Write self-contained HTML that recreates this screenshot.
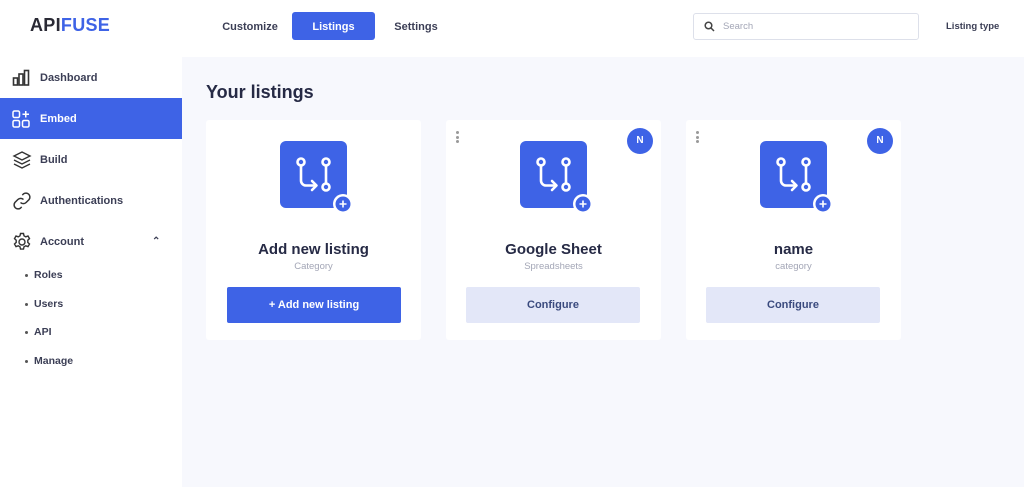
<!DOCTYPE html>
<html><head><style>
*{margin:0;padding:0;box-sizing:border-box}
body{width:1024px;height:487px;overflow:hidden;background:#f7f8fd;font-family:"Liberation Sans",sans-serif;position:relative;color:#2c2f4a}
.side{position:absolute;left:0;top:0;width:182px;height:487px;background:#fff}
.logo{position:absolute;left:30px;top:15px;font-size:18px;font-weight:bold;letter-spacing:0.3px;color:#2a2a35}
.logo span{color:#3e63e6}
.nav{position:absolute;left:0;width:182px;height:41px;display:flex;align-items:center;font-size:11px;font-weight:bold;color:#3b3e55}
.nav svg{position:absolute;left:12px}
.nav .t{position:absolute;left:40px}
.nav.act{background:#3e63e6;color:#fff}
.sub{position:absolute;left:25px;font-size:10.5px;font-weight:bold;color:#3b3e55}
.sub:before{content:"";display:inline-block;width:3px;height:3px;border-radius:50%;background:#555;margin-right:6px;vertical-align:middle}
.top{position:absolute;left:182px;top:0;width:842px;height:57px;background:#fff}
.tab{position:absolute;top:12px;height:28px;line-height:28px;font-size:11px;font-weight:bold;color:#3b3e55;text-align:center;border-radius:3px}
.search{position:absolute;left:693px;top:13px;width:226px;height:27px;border:1px solid #dde0ea;border-radius:3px;background:#fff}
h1{position:absolute;left:206px;top:82px;font-size:18px;font-weight:bold;color:#262a45}
.card{position:absolute;top:120px;width:215px;height:220px;background:#fff;border-radius:3px}
.tile{position:absolute;left:74px;top:21px;width:67px;height:67px;overflow:visible}
.title{position:absolute;top:121px;width:100%;text-align:center;font-size:15px;font-weight:bold;color:#262a45}
.cat{position:absolute;top:141px;width:100%;text-align:center;font-size:9.5px;color:#a3a6b6}
.btn{position:absolute;left:21px;top:167px;width:174px;height:36px;border-radius:2px;text-align:center;line-height:36px;font-size:11px;font-weight:bold}
.av{position:absolute;left:181px;top:8px;width:26px;height:26px;border-radius:50%;background:#3e63e6;color:#fff;font-size:10px;font-weight:bold;text-align:center;line-height:26px}
.dots{position:absolute;left:10px;top:11px;width:3px}
.dots i{display:block;width:3px;height:3px;border-radius:50%;background:#999;margin-bottom:1.5px}
</style></head><body>
<div class="side">
<div class="logo">API<span>FUSE</span></div>
<div class="nav" style="top:57px"><svg width="18" height="18" viewBox="0 0 18 18" fill="none" stroke="#333" stroke-width="1.6"><rect x="1.5" y="9" width="4" height="7"/><rect x="7" y="5" width="4" height="11"/><rect x="12.5" y="1.5" width="4" height="14.5"/></svg><span class="t">Dashboard</span></div>
<div class="nav act" style="top:98px"><svg width="18" height="18" viewBox="0 0 18 18" fill="none" stroke="#fff" stroke-width="1.5"><rect x="1" y="1" width="6.5" height="6.5" rx="1.5"/><rect x="1" y="10.5" width="6.5" height="6.5" rx="1.5"/><rect x="10.5" y="10.5" width="6.5" height="6.5" rx="1.5"/><path d="M13.75 1v6.5M10.5 4.25h6.5"/></svg><span class="t">Embed</span></div>
<div class="nav" style="top:139px"><svg width="20" height="20" viewBox="0 0 20 20" fill="none" stroke="#333" stroke-width="1.4"><path d="M10 2L18 6 10 10 2 6z"/><path d="M2 10l8 4 8-4"/><path d="M2 14l8 4 8-4"/></svg><span class="t">Build</span></div>
<div class="nav" style="top:180px"><svg width="20" height="20" viewBox="0 0 20 20" fill="none" stroke="#333" stroke-width="1.5"><path d="M8.5 11.5a4 4 0 0 0 5.6 0l3-3a4 4 0 0 0-5.6-5.6l-1.2 1.2"/><path d="M11.5 8.5a4 4 0 0 0-5.6 0l-3 3a4 4 0 0 0 5.6 5.6l1.2-1.2"/></svg><span class="t">Authentications</span></div>
<div class="nav" style="top:221px"><svg width="20" height="20" viewBox="0 0 20 20" fill="none" stroke="#333" stroke-width="1.4"><circle cx="10" cy="10" r="3"/><path d="M8.5 1.5h3l.5 2.3 1.8 1 2.2-.8 1.5 2.6-1.7 1.6v2.2l1.7 1.6-1.5 2.6-2.2-.8-1.8 1-.5 2.3h-3l-.5-2.3-1.8-1-2.2.8-1.5-2.6 1.7-1.6V8.2L2.5 6.6 4 4l2.2.8 1.8-1z"/></svg><span class="t">Account</span><span style="position:absolute;left:152px;font-size:10px">&#8963;</span></div>
<div class="sub" style="top:269px">Roles</div>
<div class="sub" style="top:298px">Users</div>
<div class="sub" style="top:326px">API</div>
<div class="sub" style="top:355px">Manage</div>
</div>
<div class="top"></div>
<div class="tab" style="left:210px;width:80px;top:13px">Customize</div>
<div class="tab" style="left:292px;width:83px;background:#3e63e6;color:#fff;top:12px;line-height:30px">Listings</div>
<div class="tab" style="left:378px;width:76px;top:13px">Settings</div>
<div class="search"><svg style="position:absolute;left:10px;top:7px" width="11" height="11" viewBox="0 0 11 11" fill="none" stroke="#444" stroke-width="1.5"><circle cx="4.5" cy="4.5" r="3.3"/><path d="M7 7l3 3"/></svg><span style="position:absolute;left:29px;top:7px;font-size:9.5px;color:#a3a6b6">Search</span></div>
<div style="position:absolute;left:946px;top:21px;font-size:9.5px;font-weight:bold;color:#3b3e55">Listing type</div>
<h1>Your listings</h1>

<div class="card" style="left:206px">
<svg class="tile" viewBox="0 0 67 67"><rect width="67" height="67" rx="6" fill="#3e63e6"/><g fill="none" stroke="#fff" stroke-width="2.6" stroke-linecap="round" stroke-linejoin="round"><circle cx="21" cy="21" r="3.5"/><circle cx="46" cy="21" r="3.5"/><circle cx="46" cy="46" r="3.5"/><path d="M46 24.5v18"/><path d="M21 24.5v15a5 5 0 0 0 5 5h9"/><path d="M32 40l4.5 4.5L32 49"/></g><circle cx="63" cy="63" r="10" fill="#fff"/><circle cx="63" cy="63" r="7.5" fill="#3e63e6"/><path d="M63 59.5v7M59.5 63h7" stroke="#fff" stroke-width="1.6"/></svg>
<div class="title">Add new listing</div><div class="cat">Category</div>
<div class="btn" style="background:#3e63e6;color:#fff">+ Add new listing</div>
</div>

<div class="card" style="left:446px">
<div class="dots"><i></i><i></i><i></i></div><div class="av">N</div>
<svg class="tile" viewBox="0 0 67 67"><rect width="67" height="67" rx="6" fill="#3e63e6"/><g fill="none" stroke="#fff" stroke-width="2.6" stroke-linecap="round" stroke-linejoin="round"><circle cx="21" cy="21" r="3.5"/><circle cx="46" cy="21" r="3.5"/><circle cx="46" cy="46" r="3.5"/><path d="M46 24.5v18"/><path d="M21 24.5v15a5 5 0 0 0 5 5h9"/><path d="M32 40l4.5 4.5L32 49"/></g><circle cx="63" cy="63" r="10" fill="#fff"/><circle cx="63" cy="63" r="7.5" fill="#3e63e6"/><path d="M63 59.5v7M59.5 63h7" stroke="#fff" stroke-width="1.6"/></svg>
<div class="title">Google Sheet</div><div class="cat">Spreadsheets</div>
<div class="btn" style="left:20px;background:#e3e7f8;color:#3a4a7e">Configure</div>
</div>

<div class="card" style="left:686px">
<div class="dots"><i></i><i></i><i></i></div><div class="av">N</div>
<svg class="tile" viewBox="0 0 67 67"><rect width="67" height="67" rx="6" fill="#3e63e6"/><g fill="none" stroke="#fff" stroke-width="2.6" stroke-linecap="round" stroke-linejoin="round"><circle cx="21" cy="21" r="3.5"/><circle cx="46" cy="21" r="3.5"/><circle cx="46" cy="46" r="3.5"/><path d="M46 24.5v18"/><path d="M21 24.5v15a5 5 0 0 0 5 5h9"/><path d="M32 40l4.5 4.5L32 49"/></g><circle cx="63" cy="63" r="10" fill="#fff"/><circle cx="63" cy="63" r="7.5" fill="#3e63e6"/><path d="M63 59.5v7M59.5 63h7" stroke="#fff" stroke-width="1.6"/></svg>
<div class="title">name</div><div class="cat">category</div>
<div class="btn" style="left:20px;background:#e3e7f8;color:#3a4a7e">Configure</div>
</div>
</body></html>
